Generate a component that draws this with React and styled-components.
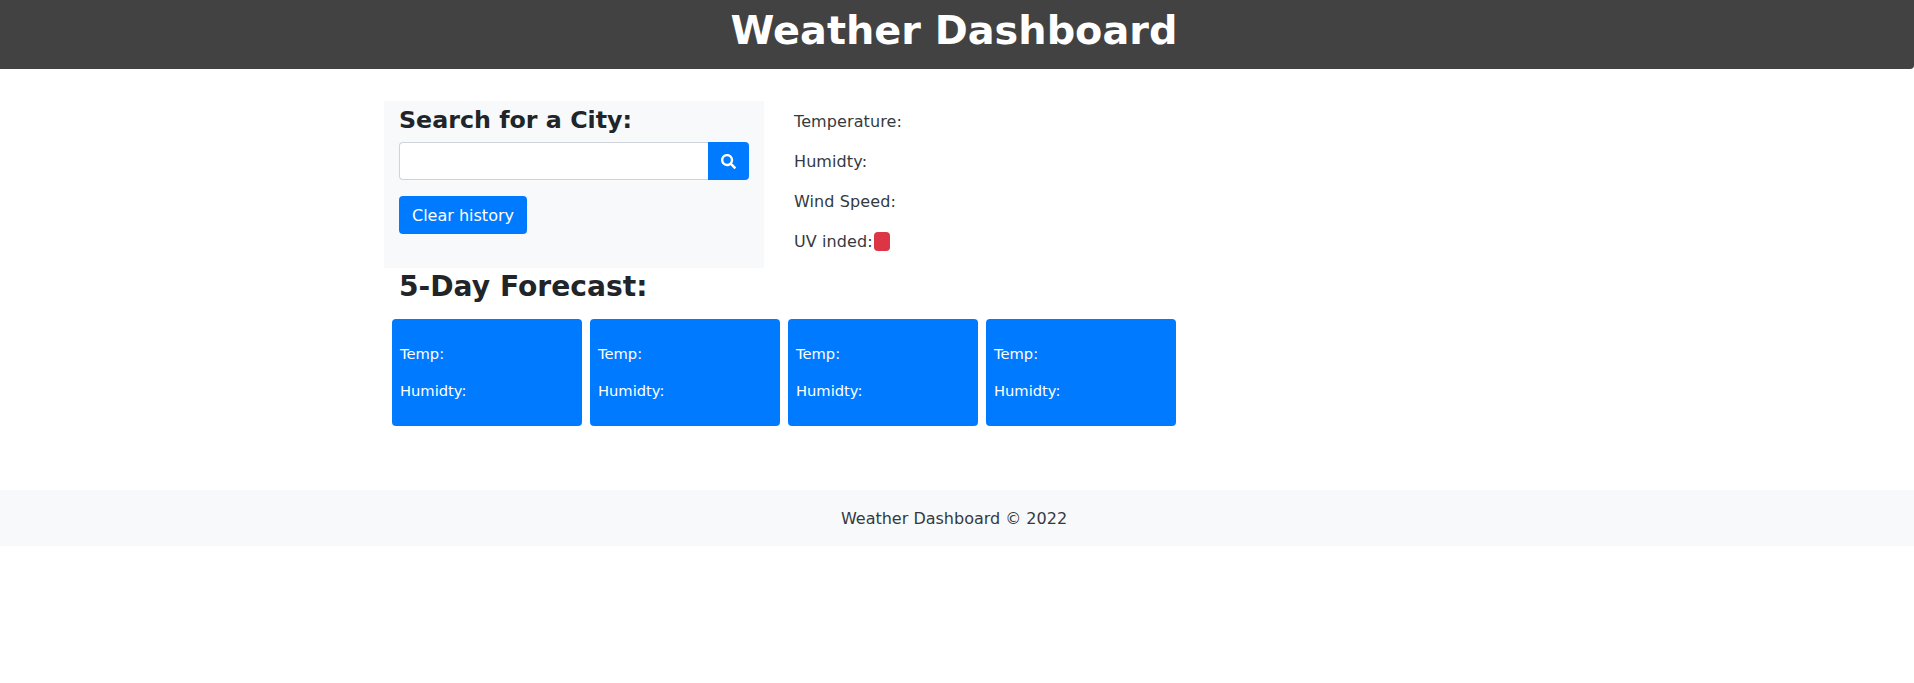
import React from 'react';
import styled, { createGlobalStyle } from 'styled-components';
import { FaSearch } from 'react-icons/fa';

const GlobalStyle = createGlobalStyle`
    * {
        box-sizing: border-box;
    }
    body {
        margin: 0;
        background: #fff;
        color: #212529;
        font-family: "DejaVu Sans", sans-serif;
        font-size: 16px;
        line-height: 24px;
    }
`;

const Header = styled.header`
    height: 69px;
    padding-right: 6px;
    background: #424242;
    border-bottom-right-radius: 4px;
    text-align: center;
`;

const Title = styled.h1`
    margin: 0;
    color: #fff;
    font-size: 39.8px;
    font-weight: 700;
    line-height: 60px;
`;

const Main = styled.main`
    width: 1140px;
    margin-left: 384px;
    padding-top: 32px;
`;

const TopRow = styled.div`
    display: flex;
`;

const SearchPanel = styled.section`
    width: 380px;
    padding: 5px 15px 34px;
    background: #f8f9fa;
`;

const SearchTitle = styled.h2`
    margin: 0 0 7px;
    font-size: 23.75px;
    font-weight: 700;
    line-height: 29px;
`;

const InputGroup = styled.div`
    display: flex;
    height: 38px;
    margin-bottom: 16px;
`;

const CityInput = styled.input`
    flex: 1;
    min-width: 0;
    border: 1px solid #ced4da;
    border-right: 0;
    border-radius: 4px 0 0 4px;
    background: #fff;
    outline: none;
`;

const Button = styled.button`
    display: flex;
    align-items: center;
    justify-content: center;
    height: 38px;
    padding: 0 13px;
    border: 0;
    border-radius: 0 4px 4px 0;
    background: #007bff;
    color: #fff;
    font-family: inherit;
    font-size: 16px;
    line-height: 24px;
`;

const ClearButton = styled(Button)`
    padding-top: 2px;
    border-radius: 4px;
`;

const Current = styled.section`
    padding: 9px 0 0 30px;
`;

const Stat = styled.p`
    display: flex;
    align-items: center;
    height: 24px;
    margin: 0 0 16px;
    color: #343a40;
    letter-spacing: 0.1px;

    &:last-child {
        margin-bottom: 0;
    }
`;

const UvBadge = styled.span`
    width: 16px;
    height: 19px;
    margin: 0 0 2px 1px;
    border-radius: 4px;
    background: #dc3545;
`;

const ForecastTitle = styled.h2`
    margin: 2px 0 16px;
    padding-left: 15px;
    font-size: 28.15px;
    font-weight: 700;
    line-height: 33px;
`;

const CardRow = styled.div`
    display: flex;
    gap: 8px;
    padding-left: 8px;
`;

const Card = styled.article`
    width: 190px;
    height: 107px;
    padding: 24px 8px 0;
    border-radius: 4px;
    background: #007bff;
    color: #fff;
`;

const CardLine = styled.p`
    margin: 0 0 16px;
    font-size: 14.7px;
    line-height: 21px;
`;

const Footer = styled.footer`
    height: 56px;
    margin-top: 64px;
    padding: 17px 6px 0 0;
    background: #f8f9fa;
    color: #343a40;
    text-align: center;
`;

const days = [1, 2, 3, 4];

function App() {
    return (
        <>
            <GlobalStyle />
            <Header>
                <Title>Weather Dashboard</Title>
            </Header>
            <Main>
                <TopRow>
                    <SearchPanel>
                        <SearchTitle>Search for a City:</SearchTitle>
                        <InputGroup>
                            <CityInput type="text" />
                            <Button aria-label="Search">
                                <FaSearch size={15} />
                            </Button>
                        </InputGroup>
                        <ClearButton>Clear history</ClearButton>
                    </SearchPanel>
                    <Current>
                        <Stat>Temperature:</Stat>
                        <Stat>Humidty:</Stat>
                        <Stat>Wind Speed:</Stat>
                        <Stat>UV inded:<UvBadge /></Stat>
                    </Current>
                </TopRow>
                <ForecastTitle>5-Day Forecast:</ForecastTitle>
                <CardRow>
                    {days.map((day) => (
                        <Card key={day}>
                            <CardLine>Temp:</CardLine>
                            <CardLine>Humidty:</CardLine>
                        </Card>
                    ))}
                </CardRow>
            </Main>
            <Footer>Weather Dashboard © 2022</Footer>
        </>
    );
}

export default App;
